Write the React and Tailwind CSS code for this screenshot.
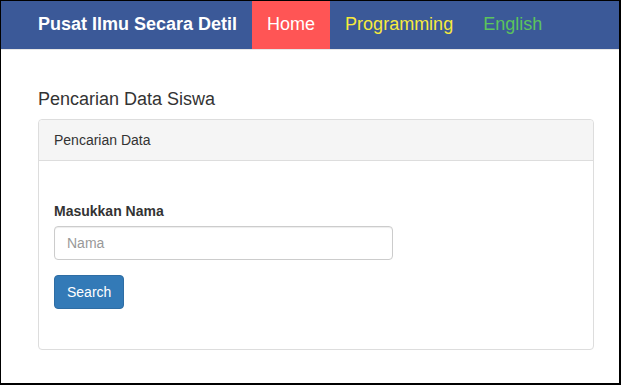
import React, { useState } from 'react';

const links = [
  { label: 'Home', className: 'bg-[#ff5555] text-white' },
  { label: 'Programming', className: 'text-[#f7ea3c]' },
  { label: 'English', className: 'text-[#5cc45c]' },
];

const App = () => {
  const [nama, setNama] = useState('');

  return (
    <div
      className="w-[621px] h-[385px] bg-white border-l border-t border-r-2 border-b-2 border-black overflow-hidden"
      style={{ fontFamily: '"Liberation Sans", Arial, sans-serif' }}
    >
      <nav className="h-[49px] bg-[#3b5998] flex pl-[37px] border-b border-[#e7e7e7]">
        <a className="pt-[13px] pr-[15px] text-[18px] leading-[20px] font-bold text-white whitespace-nowrap">
          Pusat Ilmu Secara Detil
        </a>
        {links.map((link) => (
          <a
            key={link.label}
            className={`pt-[13px] px-[15px] text-[18px] leading-[20px] whitespace-nowrap ${link.className}`}
          >
            {link.label}
          </a>
        ))}
      </nav>

      <div className="px-[37px] pt-[39px]">
        <h3 className="text-[18px] leading-[20px] text-[#333] mb-[10px]">Pencarian Data Siswa</h3>

        <div className="w-[556px] border border-[#dddddd] rounded-[4px]">
          <div className="h-[41px] bg-[#f5f5f5] border-b border-[#dddddd] rounded-t-[4px] px-[15px] pt-[10px] text-[14px] leading-[20px] text-[#333]">
            Pencarian Data
          </div>
          <div className="px-[15px] pt-[40px] pb-[40px]">
            <label className="block text-[14px] leading-[20px] font-bold text-[#333] mb-[5px]">
              Masukkan Nama
            </label>
            <input
              type="text"
              value={nama}
              onChange={(e) => setNama(e.target.value)}
              placeholder="Nama"
              className="block w-[339px] h-[34px] px-3 border border-[#cccccc] rounded-[4px] text-[14px] text-[#555] placeholder:text-[#999] shadow-[inset_0_1px_1px_rgba(0,0,0,0.075)] outline-none"
            />
            <button className="mt-[15px] h-[34px] px-3 bg-[#337ab7] border border-[#2e6da4] rounded-[4px] text-white text-[14px] leading-[20px]">
              Search
            </button>
          </div>
        </div>
      </div>
    </div>
  );
};

export default App;
